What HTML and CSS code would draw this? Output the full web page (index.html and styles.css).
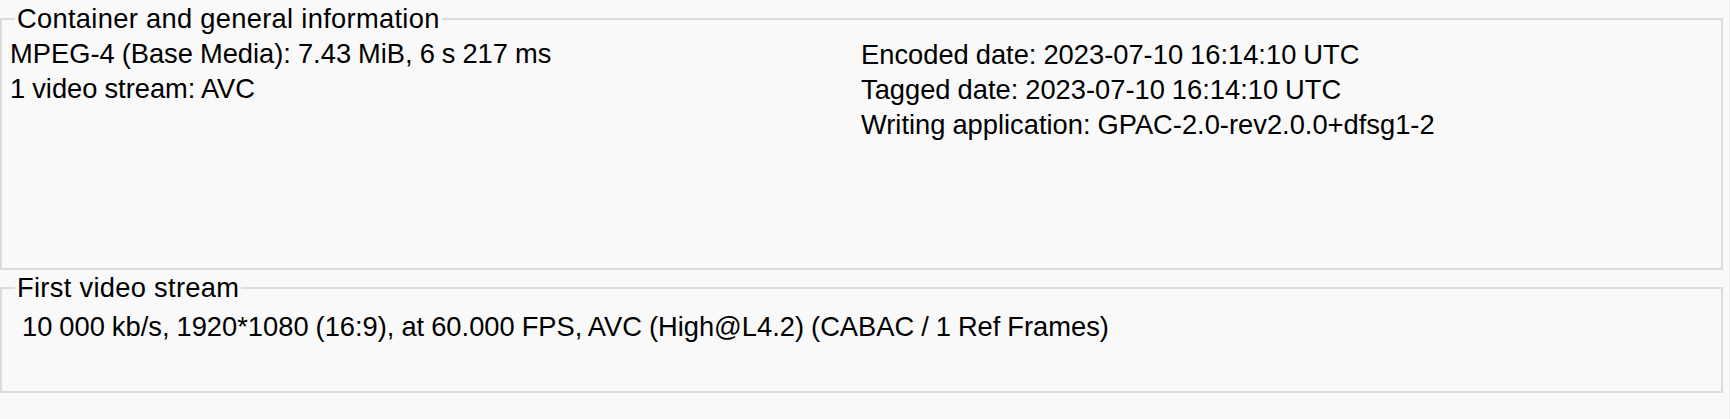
FILE: index.html
```html
<!DOCTYPE html>
<html lang="en">
<head>
  <meta charset="UTF-8">
  <title>MediaInfo - Easy</title>
  <link rel="stylesheet" href="styles.css">
</head>
<body>

  <fieldset class="group group-general">
    <legend>Container and general information</legend>
    <div class="general-info">
      <div class="col col-left">
        <div>MPEG-4 (Base Media): 7.43 MiB, 6 s 217 ms</div>
        <div>1 video stream: AVC</div>
      </div>
      <div class="col col-right">
        <div>Encoded date: 2023-07-10 16:14:10 UTC</div>
        <div>Tagged date: 2023-07-10 16:14:10 UTC</div>
        <div>Writing application: GPAC-2.0-rev2.0.0+dfsg1-2</div>
      </div>
    </div>
  </fieldset>

  <fieldset class="group group-video">
    <legend>First video stream</legend>
    <div class="video-info">
      <div>10 000 kb/s, 1920*1080 (16:9), at 60.000 FPS, AVC (High@L4.2) (CABAC / 1 Ref Frames)</div>
    </div>
  </fieldset>

</body>
</html>
```

FILE: styles.css
```css
* {
  box-sizing: border-box;
}

html, body {
  margin: 0;
  padding: 0;
  background-color: #f9f9f9;
}

body {
  width: 1730px;
  height: 419px;
  overflow: hidden;
  font-family: 'Liberation Sans', Arial, sans-serif;
  font-size: 27.3px;
  word-spacing: -0.6px;
  color: #000;
  border-right: 1px solid #ececec;
}

.group {
  width: 1723px;
  margin: 0;
  padding: 0;
  border: 2px solid #dcdcdc;
  min-width: 0;
}

.group legend {
  margin-left: 13px;
  padding: 0 2px;
  line-height: 30px;
  letter-spacing: 0.3px;
  word-spacing: 0;
}

.group-general {
  margin-top: 4px;
}

.group-video {
  margin-top: 3px;
}

/* contenu de la boîte générale */
.general-info {
  display: grid;
  grid-template-columns: 851px 1fr;
  height: 234px;
  padding: 2px 0 0 8px;
  line-height: 35px;
}

.col-right {
  padding-top: 1px;
}

.video-info {
  height: 88px;
  padding: 6px 0 0 20px;
  line-height: 35px;
}
```
